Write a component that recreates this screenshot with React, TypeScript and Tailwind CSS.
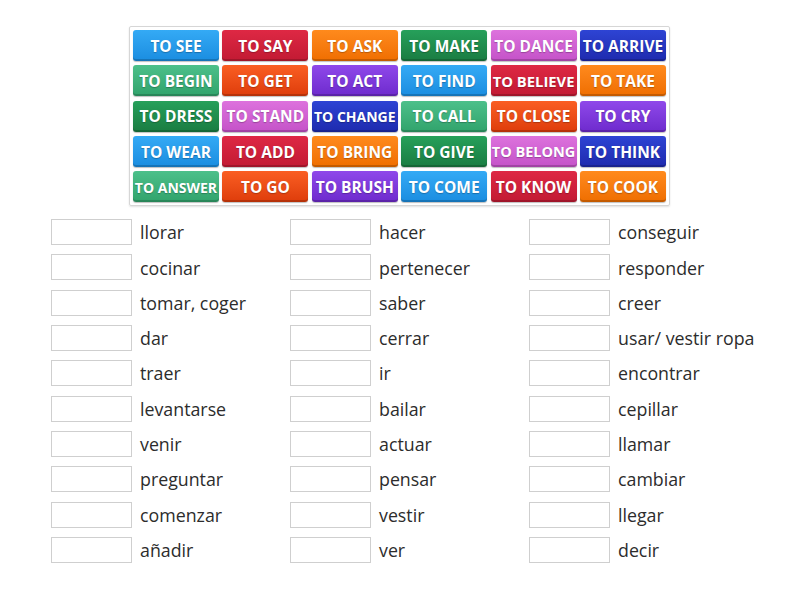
import React from "react";

type Tile = { t: string; c: string; s?: string };

const C: Record<string, string> = {
  blue: "bg-gradient-to-b from-[#34aaf5] to-[#1a8de0]",
  red: "bg-gradient-to-b from-[#de2844] to-[#c21a33]",
  orange: "bg-gradient-to-b from-[#ff8a1c] to-[#ef6e00]",
  dgreen: "bg-gradient-to-b from-[#26a05a] to-[#1a7c42]",
  pink: "bg-gradient-to-b from-[#dd72dd] to-[#c452c8]",
  dblue: "bg-gradient-to-b from-[#2e44d4] to-[#1e2aae]",
  green: "bg-gradient-to-b from-[#4cc08a] to-[#31a36c]",
  ored: "bg-gradient-to-b from-[#fa5e22] to-[#de3c0a]",
  purple: "bg-gradient-to-b from-[#8f48ea] to-[#6e2acd]",
};

const tiles: Tile[] = [
  { t: "TO SEE", c: "blue" },
  { t: "TO SAY", c: "red" },
  { t: "TO ASK", c: "orange" },
  { t: "TO MAKE", c: "dgreen" },
  { t: "TO DANCE", c: "pink" },
  { t: "TO ARRIVE", c: "dblue" },
  { t: "TO BEGIN", c: "green" },
  { t: "TO GET", c: "ored" },
  { t: "TO ACT", c: "purple" },
  { t: "TO FIND", c: "blue" },
  { t: "TO BELIEVE", c: "red", s: "text-[14.8px]" },
  { t: "TO TAKE", c: "orange" },
  { t: "TO DRESS", c: "dgreen" },
  { t: "TO STAND", c: "pink" },
  { t: "TO CHANGE", c: "dblue", s: "text-[14px]" },
  { t: "TO CALL", c: "green" },
  { t: "TO CLOSE", c: "ored" },
  { t: "TO CRY", c: "purple" },
  { t: "TO WEAR", c: "blue" },
  { t: "TO ADD", c: "red" },
  { t: "TO BRING", c: "orange" },
  { t: "TO GIVE", c: "dgreen" },
  { t: "TO BELONG", c: "pink", s: "text-[14.5px]" },
  { t: "TO THINK", c: "dblue" },
  { t: "TO ANSWER", c: "green", s: "text-[14px]" },
  { t: "TO GO", c: "ored" },
  { t: "TO BRUSH", c: "purple" },
  { t: "TO COME", c: "blue" },
  { t: "TO KNOW", c: "red" },
  { t: "TO COOK", c: "orange" },
];

const cols: string[][] = [
  ["llorar", "cocinar", "tomar, coger", "dar", "traer", "levantarse", "venir", "preguntar", "comenzar", "añadir"],
  ["hacer", "pertenecer", "saber", "cerrar", "ir", "bailar", "actuar", "pensar", "vestir", "ver"],
  ["conseguir", "responder", "creer", "usar/ vestir ropa", "encontrar", "cepillar", "llamar", "cambiar", "llegar", "decir"],
];

export default function App() {
  return (
    <div
      className="w-[800px] h-[600px] bg-white overflow-hidden"
      style={{ fontFamily: '"Open Sans", "Liberation Sans", sans-serif' }}
    >
      <div className="pt-[26px] pl-[129px]">
        <div className="w-[541px] border border-[#d6d6d6] rounded-[2px] p-[3px] shadow-[0_1px_2px_rgba(0,0,0,0.12)]">
          <div className="grid grid-cols-[repeat(6,86px)] gap-x-[3.4px] gap-y-[4.3px]">
            {tiles.map((x, i) => (
              <div
                key={i}
                className={`${C[x.c]} h-[31px] pt-[2px] rounded-[3px] flex items-center justify-center text-white font-bold whitespace-nowrap leading-none shadow-[inset_0_-2px_0_rgba(0,0,0,0.18),0_1px_1px_rgba(0,0,0,0.25)] [text-shadow:0_1px_1px_rgba(0,0,0,0.25)] ${x.s ?? "text-[15.5px]"}`}
              >
                {x.t}
              </div>
            ))}
          </div>
        </div>
      </div>
      <div className="grid grid-cols-[repeat(3,239px)] pl-[51px] pt-[13px]">
        {cols.map((col, ci) => (
          <div key={ci} className="flex flex-col gap-[9.3px]">
            {col.map((w, ri) => (
              <div key={ri} className="flex items-center h-[26px]">
                <div className="w-[81px] h-[26px] border border-[#cfcfcf] bg-white shrink-0" />
                <span className="ml-[8px] pt-[2px] text-[17.8px] text-[#2c2c2c] whitespace-nowrap leading-none">
                  {w}
                </span>
              </div>
            ))}
          </div>
        ))}
      </div>
    </div>
  );
}
